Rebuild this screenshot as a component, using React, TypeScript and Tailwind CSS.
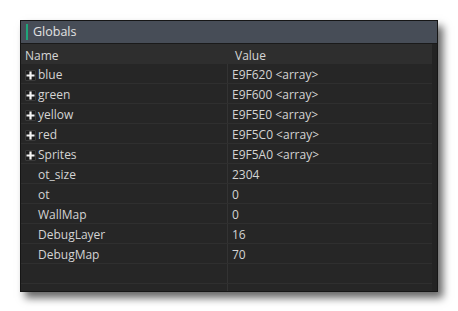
type Row = {
  name: string;
  value: string;
  expandable?: boolean;
};

const rows: Row[] = [
  { name: "blue", value: "E9F620 <array>", expandable: true },
  { name: "green", value: "E9F600 <array>", expandable: true },
  { name: "yellow", value: "E9F5E0 <array>", expandable: true },
  { name: "red", value: "E9F5C0 <array>", expandable: true },
  { name: "Sprites", value: "E9F5A0 <array>", expandable: true },
  { name: "ot_size", value: "2304" },
  { name: "ot", value: "0" },
  { name: "WallMap", value: "0" },
  { name: "DebugLayer", value: "16" },
  { name: "DebugMap", value: "70" },
  { name: "", value: "" },
];

function PlusBox() {
  return (
    <span className="flex h-[11px] w-[11px] items-center justify-center rounded-[1px] border border-[#3a3a3a] bg-[#1e1e1e]">
      <svg className="h-[9px] w-[9px]" viewBox="0 0 9 9">
        <path d="M4.5 0.5V8.5M0.5 4.5H8.5" stroke="#f4f4f4" strokeWidth="2.2" />
      </svg>
    </span>
  );
}

export default function App() {
  return (
    <div
      className="h-[311px] w-[458px] bg-white pl-5 pt-5"
      style={{ fontFamily: '"Open Sans", "Noto Sans", sans-serif' }}
    >
      <div className="flex h-[272px] w-[418px] flex-col border border-[#161616] bg-[#262626] shadow-[5px_6px_8px_rgba(0,0,0,0.6)]">
        <div className="flex h-[23px] shrink-0 items-center border-b border-[#1a1a1a] bg-[#474d57] pl-[5px]">
          <span className="h-[16px] w-[2px] bg-[#1fa57a]" />
          <span className="ml-[5px] text-[12.5px] text-[#e2e2e2]">Globals</span>
        </div>

        <div className="flex flex-1 flex-col border-r-[5px] border-[#232323]">
          <div className="flex h-5 shrink-0 items-center bg-[#2e2e2e] pt-[3px] text-[12px] text-[#d6d6d6]">
            <div className="w-[207px] pl-[4px]">Name</div>
            <div className="pl-[7px]">Value</div>
          </div>

          <div className="flex flex-1 flex-col">
            {rows.map((r, i) => (
              <div
                key={i}
                className="flex h-5 shrink-0 border-b border-[#2f2f2f] text-[12px] text-[#d4d4d4]"
              >
                <div className="flex h-full w-[207px] items-center border-r border-[#333333] pl-[4px] pt-[3px]">
                  <span className="w-[12px]">{r.expandable ? <PlusBox /> : null}</span>
                  <span className="ml-[1px]">{r.name}</span>
                </div>
                <div className="flex items-center pl-[4px] pt-[3px]">{r.value}</div>
              </div>
            ))}
            <div className="flex flex-1">
              <div className="w-[207px] border-r border-[#333333]" />
            </div>
          </div>
        </div>
      </div>
    </div>
  );
}
